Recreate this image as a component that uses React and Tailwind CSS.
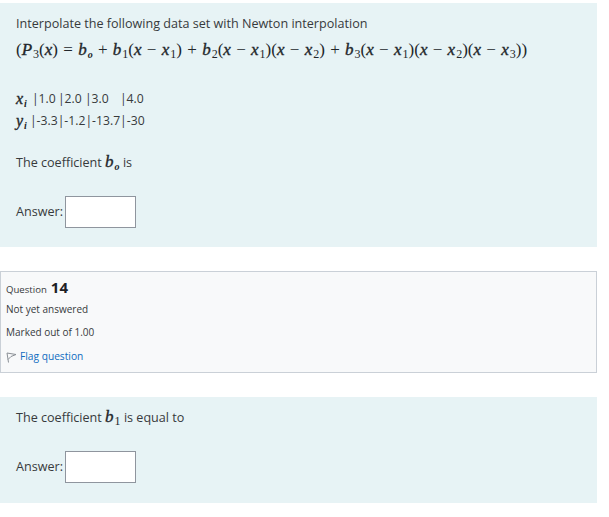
const body = { fontFamily: '"Open Sans", "Noto Sans", sans-serif' };

const V = ({ children, sub, small }) => (
  <span className="whitespace-nowrap">
    <span className="italic [-webkit-text-stroke:0.35px]">{children}</span>
    {sub && (
      <span className={`${small ? 'text-[10px] font-bold italic' : 'text-[12px]'} leading-none align-[-3px] ml-[1px]`}>
        {sub}
      </span>
    )}
  </span>
);

const Op = ({ children }) => <span className="mx-[5.3px]">{children}</span>;

const Factor = ({ n }) => (
  <span>
    (<V>x</V><Op>−</Op><V sub={n}>x</V>)
  </span>
);

const AnswerRow = ({ className }) => (
  <div className={`flex items-center gap-[2px] text-[12.6px] text-[#373a3c] ${className}`}>
    <span>Answer:</span>
    <input type="text" className="w-[71px] h-[32px] bg-white border border-[#8f959e]" />
  </div>
);

const mathFont = 'font-["Liberation_Serif",serif]';

export default function App() {
  return (
    <div style={body} className="w-[609px] h-[517px] bg-white pt-[3px] overflow-hidden">
      <div className="w-[597px] h-[244px] bg-[#e7f3f5] pt-[12px] pl-[16px]">
        <p className="text-[12.6px] leading-[18px] text-[#373a3c]">
          Interpolate the following data set with Newton interpolation
        </p>
        <p className={`${mathFont} mt-[5px] text-[17px] leading-[24px] text-[#22262a] whitespace-nowrap`}>
          (<V sub="3">P</V>(<V>x</V>)<Op>=</Op><V sub="o" small>b</V>
          <Op>+</Op><V sub="1">b</V><Factor n="1" />
          <Op>+</Op><V sub="2">b</V><Factor n="1" /><Factor n="2" />
          <Op>+</Op><V sub="3">b</V><Factor n="1" /><Factor n="2" /><Factor n="3" />)
        </p>
        <div className="mt-[26px] flex items-center h-[22px] text-[12.2px] text-[#373a3c]">
          <span className={`${mathFont} text-[16px] text-[#22262a]`}><V sub="i" small>x</V></span>
          <span className="ml-[5px] w-[26px]">|1.0</span>
          <span className="w-[27px]">|2.0</span>
          <span className="w-[35px]">|3.0</span>
          <span>|4.0</span>
        </div>
        <div className="flex items-center h-[22px] text-[12.2px] text-[#373a3c]">
          <span className={`${mathFont} text-[16px] text-[#22262a]`}><V sub="i" small>y</V></span>
          <span className="ml-[3px]">|-3.3|-1.2|-13.7|-30</span>
        </div>
        <p className="mt-[19px] text-[12.6px] leading-[22px] text-[#373a3c]">
          The coefficient <span className={`${mathFont} text-[17px] text-[#22262a]`}><V sub="o" small>b</V></span> is
        </p>
        <AnswerRow className="mt-[22px]" />
      </div>

      <div className="mt-[24px] w-[597px] h-[102px] bg-[#f8f9fa] border border-[#cad0d7] pl-[5px] pt-[4px] text-[#373a3c]">
        <div className="flex items-baseline text-[9.6px] h-[20px]">
          Question <span className="ml-[4px] text-[15px] font-bold text-[#1d2125]">14</span>
        </div>
        <div className="mt-[5px] text-[10px] leading-[16px]">Not yet answered</div>
        <div className="mt-[7px] text-[10px] leading-[16px]">Marked out of 1.00</div>
        <div className="mt-[8px] flex items-center gap-[3px] text-[10.2px] leading-[16px] text-[#0f6cbf]">
          <svg width="11" height="11" viewBox="0 0 11 11" fill="none" stroke="#8a8f95" strokeWidth="1" className="mt-[2px]">
            <path d="M2.5 10.5 L1 1 L10 2.5 L5 4.5 L2 7.5" />
          </svg>
          Flag question
        </div>
      </div>

      <div className="mt-[24px] w-[597px] h-[106px] bg-[#e7f3f5] pt-[9px] pl-[16px]">
        <p className="text-[12.6px] leading-[22px] text-[#373a3c]">
          The coefficient <span className={`${mathFont} text-[17px] text-[#22262a]`}><V sub="1">b</V></span> is equal to
        </p>
        <AnswerRow className="mt-[22px]" />
      </div>
    </div>
  );
}
